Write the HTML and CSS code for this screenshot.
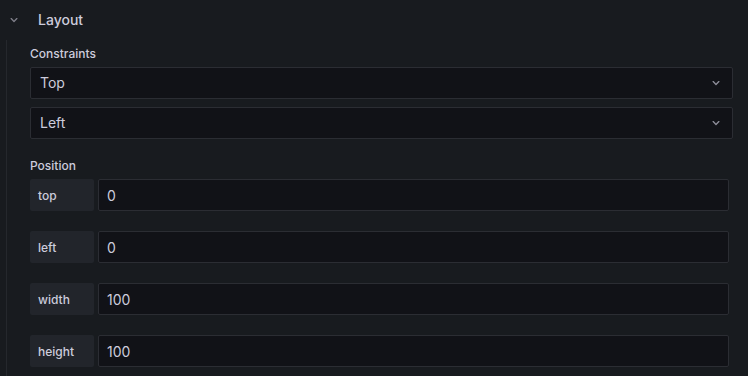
FILE: index.html
```html
<!DOCTYPE html>
<html>
<head>
<meta charset="utf-8">
<link rel="stylesheet" href="styles.css">
</head>
<body>
<div class="section">
  <div class="section-header">
    <svg class="chev chev-head" viewBox="0 0 24 24" width="16" height="16"><path d="M17,9.17a1,1,0,0,0-1.41,0L12,12.71,8.46,9.170a1,1,0,0,0-1.41,0,1,1,0,0,0,0,1.42l4.24,4.24a1,1,0,0,0,1.42,0L17,10.59A1,1,0,0,0,17,9.17Z"/></svg>
    <span class="section-title">Layout</span>
  </div>
  <div class="section-body">
    <div class="field">
      <div class="field-label">Constraints</div>
      <div class="select">
        <span class="select-value">Top</span>
        <svg class="chev" viewBox="0 0 24 24" width="16" height="16"><path d="M17,9.17a1,1,0,0,0-1.41,0L12,12.71,8.46,9.17a1,1,0,0,0-1.41,0,1,1,0,0,0,0,1.42l4.24,4.24a1,1,0,0,0,1.42,0L17,10.59A1,1,0,0,0,17,9.17Z"/></svg>
      </div>
      <div class="select">
        <span class="select-value">Left</span>
        <svg class="chev" viewBox="0 0 24 24" width="16" height="16"><path d="M17,9.17a1,1,0,0,0-1.41,0L12,12.71,8.46,9.17a1,1,0,0,0-1.41,0,1,1,0,0,0,0,1.42l4.24,4.24a1,1,0,0,0,1.42,0L17,10.59A1,1,0,0,0,17,9.17Z"/></svg>
      </div>
    </div>
    <div class="field">
      <div class="field-label">Position</div>
      <div class="inline-row"><div class="inline-label">top</div><div class="input">0</div></div>
      <div class="inline-row"><div class="inline-label">left</div><div class="input">0</div></div>
      <div class="inline-row"><div class="inline-label">width</div><div class="input">100</div></div>
      <div class="inline-row"><div class="inline-label">height</div><div class="input">100</div></div>
    </div>
  </div>
</div>
</body>
</html>
```
FILE: styles.css
```css
html, body {
  margin: 0;
  padding: 0;
  background: #181b1f;
  height: 100%;
  overflow: hidden;
}
body {
  font-family: Inter, "Noto Sans", sans-serif;
  color: #ccccdc;
}
.section {
  height: 100vh;
  display: flex;
  flex-direction: column;
}
.section-header {
  height: 40px;
  flex: none;
  display: flex;
  align-items: center;
  padding-left: 6px;
  gap: 16px;
}
.chev {
  fill: #8e8e9a;
  flex: none;
}
.chev-head {
  fill: #7e7e88;
}
.section-title {
  font-size: 14px;
  font-weight: 500;
  line-height: 20px;
  color: #ccccdc;
}
.section-body {
  flex: 1;
  margin-left: 6px;
  border-left: 1px solid #25282d;
  padding: 6px 15px 0 23px;
  overflow: hidden;
}
.field {
  margin-bottom: 19px;
}
.field:last-child {
  margin-bottom: 0;
}
.field-label {
  font-size: 12px;
  font-weight: 500;
  line-height: 16px;
  margin-bottom: 5px;
  color: #ccccdc;
}
.select {
  height: 32px;
  box-sizing: border-box;
  background: #111217;
  border: 1px solid #2b2d33;
  border-radius: 2px;
  display: flex;
  align-items: center;
  justify-content: space-between;
  padding: 0 8px 0 9px;
  margin-bottom: 8px;
}
.select:last-child {
  margin-bottom: 0;
}
.select-value {
  font-size: 14px;
  line-height: 20px;
  color: #ccccdc;
}
.inline-row {
  display: flex;
  gap: 4px;
  height: 32px;
  margin-right: 4px;
  margin-bottom: 20px;
}
.inline-row:last-child {
  margin-bottom: 0;
}
.inline-label {
  width: 64px;
  box-sizing: border-box;
  background: #22252b;
  border-radius: 2px;
  padding: 0 8px;
  display: flex;
  align-items: center;
  font-size: 12px;
  font-weight: 500;
  color: #ccccdc;
}
.input {
  flex: 1;
  box-sizing: border-box;
  background: #111217;
  border: 1px solid #2b2d33;
  border-radius: 2px;
  padding: 0 8px;
  display: flex;
  align-items: center;
  font-size: 14px;
  color: #ccccdc;
}
```
